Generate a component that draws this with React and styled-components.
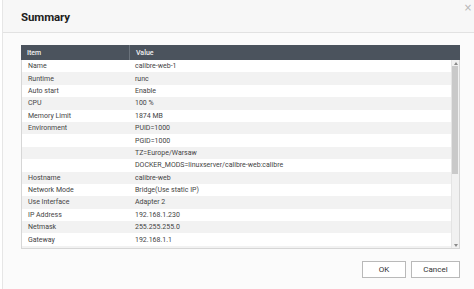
import React from "react";
import styled, { createGlobalStyle } from "styled-components";

const Global = createGlobalStyle`
  html, body { margin: 0; padding: 0; background: #ffffff; }
  body { font-family: Roboto, "Liberation Sans", Arial, sans-serif; }
`;

const Dialog = styled.div`
  width: 474px;
  height: 289px;
  box-sizing: border-box;
  background: #fbfbfb;
  border-left: 1px solid #e6e6e6;
  margin-left: 2px;
  display: flex;
  flex-direction: column;
  position: relative;
`;

const Header = styled.div`
  height: 31px;
  flex: none;
  background: #f7f7f7;
  border-bottom: 1px solid #e2e2e2;
  display: flex;
  align-items: center;
  padding-left: 18px;
  padding-top: 1px;
`;

const Title = styled.h1`
  margin: 0;
  font-size: 11.5px;
  font-weight: 700;
  color: #1d1d1d;
  letter-spacing: -0.1px;
`;

const Close = styled.button`
  position: absolute;
  top: 2px;
  right: 2px;
  width: 12px;
  height: 12px;
  padding: 0;
  border: none;
  background: none;
  color: #b5b5b5;
  font-size: 10px;
  line-height: 12px;
  font-family: "DejaVu Sans", sans-serif;
`;

const Body = styled.div`
  flex: 1;
  padding: 12px 16px 0 18px;
  display: flex;
  flex-direction: column;
`;

const Table = styled.div`
  height: 204px;
  box-sizing: border-box;
  border: 1px solid #d6d6d6;
  border-top: none;
  display: flex;
  flex-direction: column;
  background: #ffffff;
`;

const HeadRow = styled.div`
  height: 15px;
  flex: none;
  margin: 0 -1px;
  background: #4b535d;
  display: grid;
  grid-template-columns: 108px 1fr;
  font-size: 7px;
  font-weight: 500;
  color: #f0f0f0;
`;

const HeadCell = styled.div`
  display: flex;
  align-items: center;
  padding-left: 6px;
  border-left: ${(p) => (p.$divider ? "1px solid #6b737c" : "none")};
`;

const Scroller = styled.div`
  flex: 1;
  display: flex;
  overflow: hidden;
`;

const Rows = styled.div`
  flex: 1;
  overflow: hidden;
`;

const Row = styled.div`
  height: 12.4px;
  display: grid;
  grid-template-columns: 107px 1fr;
  background: ${(p) => (p.$odd ? "#f2f2f2" : "#ffffff")};
  font-size: 7px;
  color: #444444;
`;

const Cell = styled.div`
  display: flex;
  align-items: center;
  padding-left: 6px;
  white-space: nowrap;
  overflow: hidden;
`;

const ScrollBar = styled.div`
  width: 7px;
  flex: none;
  background: #f1f1f1;
  border-left: 1px solid #e4e4e4;
  display: flex;
  flex-direction: column;
  align-items: stretch;
`;

const Arrow = styled.div`
  height: 6px;
  display: flex;
  align-items: center;
  justify-content: center;
  flex: none;
`;

const Track = styled.div`
  flex: 1;
  display: flex;
  flex-direction: column;
`;

const Thumb = styled.div`
  height: 108px;
  margin: 0 1px 0 0;
  background: #c9c9c9;
`;

const Footer = styled.div`
  display: flex;
  justify-content: flex-end;
  gap: 5px;
  padding-top: 12px;
`;

const Button = styled.button`
  height: 17px;
  width: ${(p) => p.$w}px;
  box-sizing: border-box;
  background: #ffffff;
  border: 1px solid #b9b9b9;
  font-family: Roboto, "Liberation Sans", Arial, sans-serif;
  font-size: 8px;
  color: #333;
  padding: 0;
`;

const rows = [
  ["Name", "calibre-web-1"],
  ["Runtime", "runc"],
  ["Auto start", "Enable"],
  ["CPU", "100 %"],
  ["Memory Limit", "1874 MB"],
  ["Environment", "PUID=1000"],
  ["", "PGID=1000"],
  ["", "TZ=Europe/Warsaw"],
  ["", "DOCKER_MODS=linuxserver/calibre-web:calibre"],
  ["Hostname", "calibre-web"],
  ["Network Mode", "Bridge(Use static IP)"],
  ["Use Interface", "Adapter 2"],
  ["IP Address", "192.168.1.230"],
  ["Netmask", "255.255.255.0"],
  ["Gateway", "192.168.1.1"],
  ["Allocate terminal (TTY)", "Enable"],
];

const Tri = ({ up }) => (
  <svg width="4" height="3" viewBox="0 0 4 3">
    <path d={up ? "M0 3 L2 0 L4 3 Z" : "M0 0 L2 3 L4 0 Z"} fill="#8a8a8a" />
  </svg>
);

export default function App() {
  return (
    <>
      <Global />
      <Dialog>
        <Header>
          <Title>Summary</Title>
        </Header>
        <Close aria-label="close">×</Close>
        <Body>
          <Table>
            <HeadRow>
              <HeadCell>Item</HeadCell>
              <HeadCell $divider>Value</HeadCell>
            </HeadRow>
            <Scroller>
              <Rows>
                {rows.map(([k, v], i) => (
                  <Row key={i} $odd={i % 2 === 1}>
                    <Cell>{k}</Cell>
                    <Cell>{v}</Cell>
                  </Row>
                ))}
              </Rows>
              <ScrollBar>
                <Arrow>
                  <Tri up />
                </Arrow>
                <Track>
                  <Thumb />
                </Track>
                <Arrow>
                  <Tri />
                </Arrow>
              </ScrollBar>
            </Scroller>
          </Table>
          <Footer>
            <Button $w={44}>OK</Button>
            <Button $w={49}>Cancel</Button>
          </Footer>
        </Body>
      </Dialog>
    </>
  );
}
